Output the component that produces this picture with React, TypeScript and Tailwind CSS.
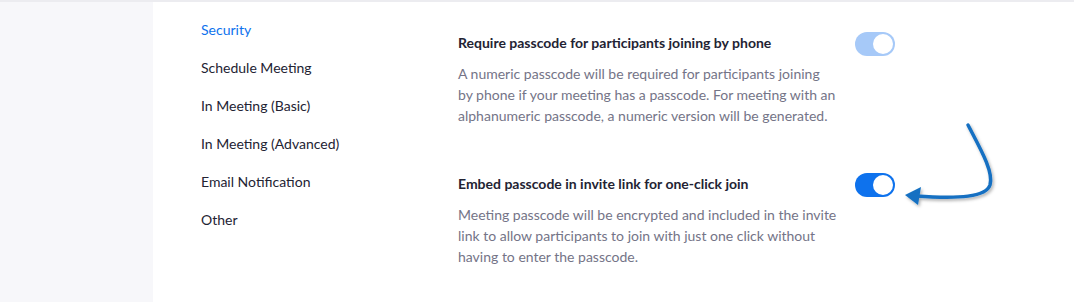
import React from 'react';

const navItems = [
  'Security',
  'Schedule Meeting',
  'In Meeting (Basic)',
  'In Meeting (Advanced)',
  'Email Notification',
  'Other',
];

const settings = [
  {
    title: 'Require passcode for participants joining by phone',
    desc: 'A numeric passcode will be required for participants joining by phone if your meeting has a passcode. For meeting with an alphanumeric passcode, a numeric version will be generated.',
    disabled: true,
    width: 'w-[378px]',
  },
  {
    title: 'Embed passcode in invite link for one-click join',
    desc: 'Meeting passcode will be encrypted and included in the invite link to allow participants to join with just one click without having to enter the passcode.',
    disabled: false,
    width: 'w-[381px]',
  },
];

function Toggle({ disabled }: { disabled: boolean }) {
  return (
    <div
      className={`flex h-[24px] w-[40px] shrink-0 items-center justify-end rounded-full px-[2px] ${
        disabled ? 'bg-[#a6c9f8]' : 'bg-[#0e72ed]'
      }`}
    >
      <div className="h-[20px] w-[20px] rounded-full bg-white" />
    </div>
  );
}

export default function App() {
  return (
    <div
      className="flex h-[302px] w-[1074px] border-t-2 border-[#ececf0] bg-white"
      style={{ fontFamily: 'Lato, "Open Sans", sans-serif' }}
    >
      {/* left gutter */}
      <div className="w-[153px] shrink-0 bg-[#f7f7fa]" />

      {/* settings nav */}
      <nav className="w-[257px] shrink-0 pl-[48px] pt-[9px]">
        {navItems.map((item, i) => (
          <div
            key={item}
            className={`h-[38px] text-[14px] leading-[38px] ${
              i === 0 ? 'text-[#0e72ed]' : 'text-[#232333]'
            }`}
          >
            {item}
          </div>
        ))}
      </nav>

      {/* settings list */}
      <div className="relative flex-1 pl-[48px] pt-[30px]">
        {settings.map((s, i) => (
          <div key={s.title} className={`flex w-[437px] justify-between ${i > 0 ? 'mt-[47px]' : ''}`}>
            <div className={s.width}>
              <div className="text-[14px] font-bold leading-[21px] text-[#232333]">{s.title}</div>
              <p className="mt-[10px] text-[14px] leading-[21px] text-[#747487]">{s.desc}</p>
            </div>
            <Toggle disabled={s.disabled} />
          </div>
        ))}

        {/* annotation arrow */}
        <svg
          className="pointer-events-none absolute left-[485px] top-[113px]"
          width="110"
          height="100"
          viewBox="895 115 110 100"
        >
          <defs>
            <filter id="sh" x="-20%" y="-20%" width="140%" height="140%">
              <feDropShadow dx="1.5" dy="2" stdDeviation="1.5" floodColor="#000" floodOpacity="0.3" />
            </filter>
          </defs>
          <g filter="url(#sh)">
            <path
              d="M968 125 C980 148 994 172 990 185 C986 197 960 199 916 196"
              fill="none"
              stroke="#1470c2"
              strokeWidth="3.5"
              strokeLinecap="round"
            />
            <path d="M905 195 L921 187 L918 205 Z" fill="#1470c2" />
          </g>
        </svg>
      </div>
    </div>
  );
}
